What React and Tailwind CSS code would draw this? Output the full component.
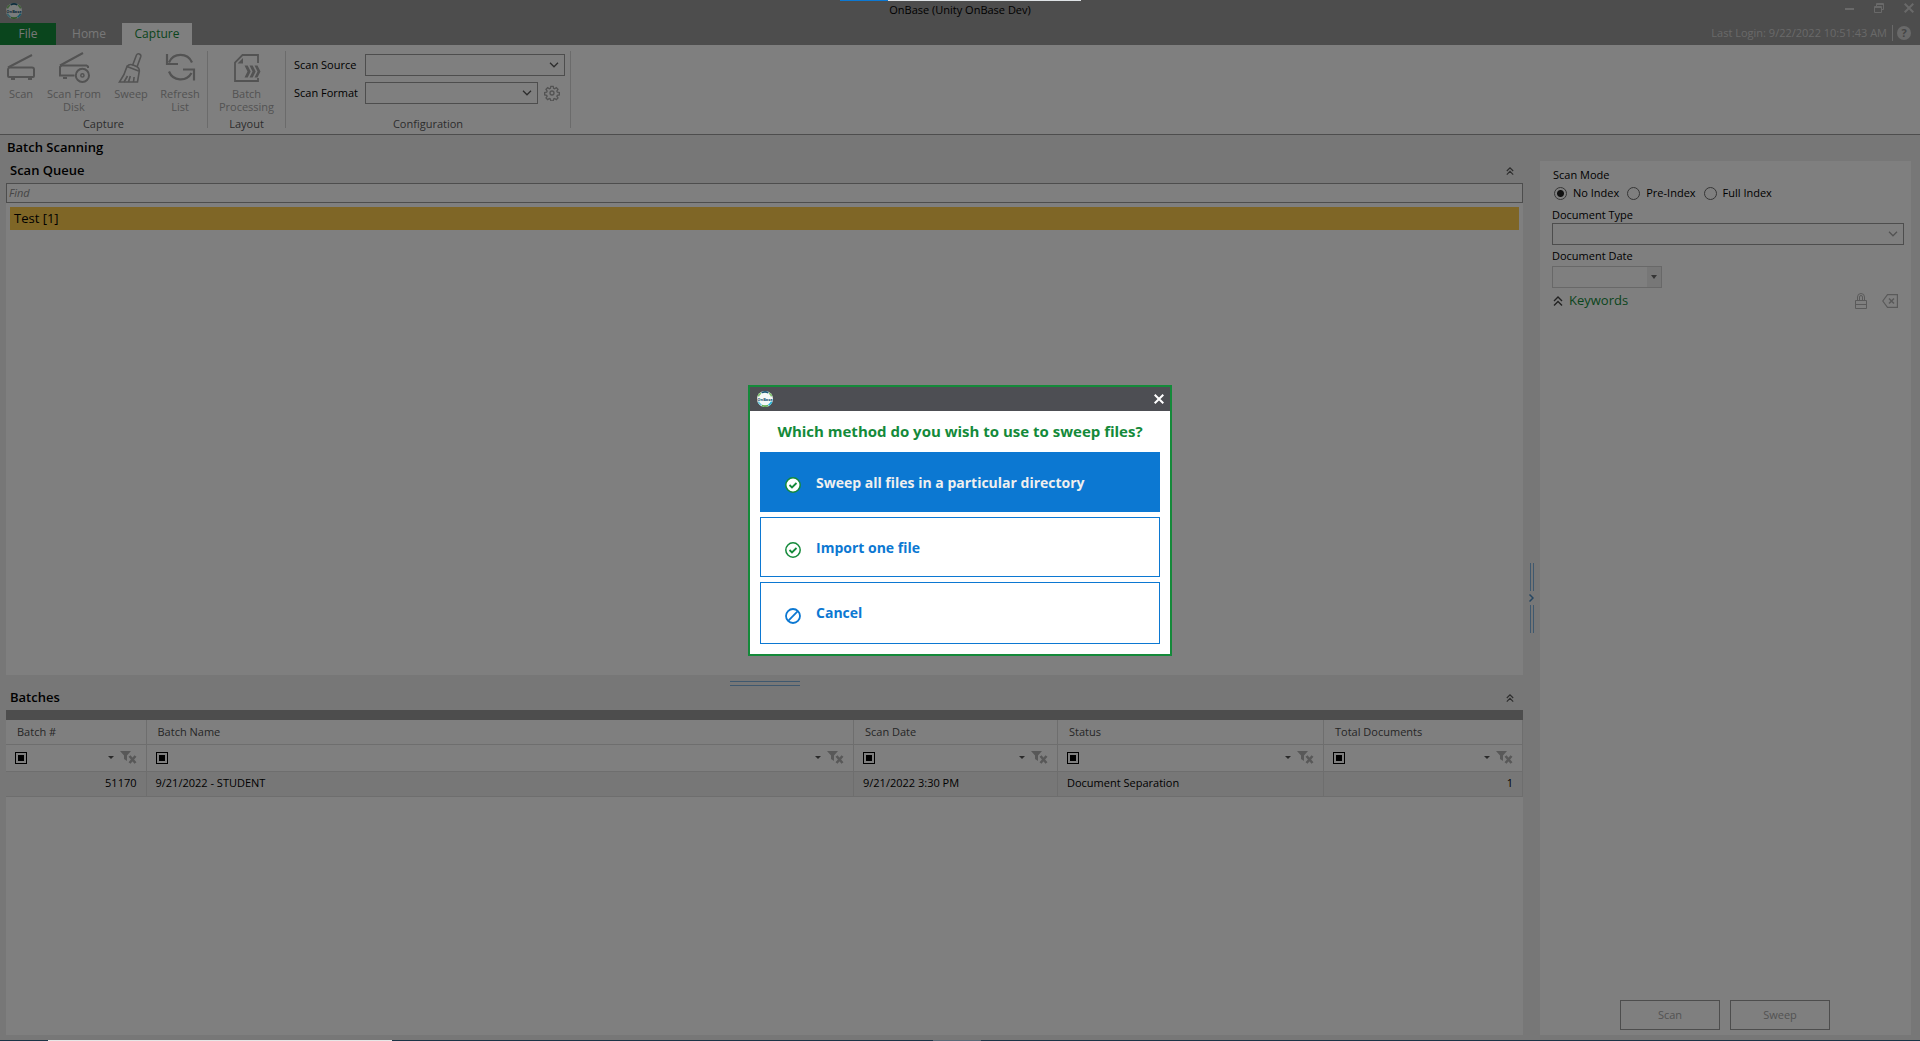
import { useState } from "react";

const columns = [
  { id: "number", label: "Batch #", value: "51170", width: "w-[140px]", align: "text-right" },
  { id: "name", label: "Batch Name", value: "9/21/2022 - STUDENT", width: "", align: "text-left" },
  { id: "date", label: "Scan Date", value: "9/21/2022 3:30 PM", width: "w-[204px]", align: "text-left" },
  { id: "status", label: "Status", value: "Document Separation", width: "w-[266px]", align: "text-left" },
  { id: "total", label: "Total Documents", value: "1", width: "w-[199px]", align: "text-right" },
];

function Logo() {
  return (
    <svg width="16" height="16" viewBox="0 0 16 16" aria-hidden="true">
      <circle cx="8" cy="8" r="8" fill="#f4f8f8" />
      <g fill="none" strokeWidth="1.6">
        <path d="M4.6 1.8a7.2 7.2 0 0 1 6.8 0" stroke="#1b5a78" />
        <path d="M1.3 5.4a7.2 7.2 0 0 1 2.6-3.2M12.1 2.2a7.2 7.2 0 0 1 2.6 3.2" stroke="#7cc36a" />
        <path d="M1.3 10.6a7.2 7.2 0 0 0 3.2 3.6" stroke="#6fc6d8" />
        <path d="M14.7 10.6a7.2 7.2 0 0 1-3.2 3.6" stroke="#27b4d6" />
        <path d="M5 14.4a7.2 7.2 0 0 0 6 0" stroke="#5aa84a" />
      </g>
      <text x="8" y="9.500" textAnchor="middle" fontSize="4" fontWeight="700" fill="#14506e" fontFamily="Open Sans, sans-serif">
        OnBase
      </text>
    </svg>
  );
}

function ScanIcon() {
  return (
    <svg width="32" height="32" viewBox="0 0 32 32" fill="none" stroke="currentColor" strokeWidth="2">
      <path d="M3 16.5 27 4" />
      <path d="M5 16.5h22a2 2 0 0 1 2 2V25a1 1 0 0 1-1 1H4a1 1 0 0 1-1-1v-6.500a2 2 0 0 1 2-2z" />
      <path d="M6 28h4M23 28h4" />
    </svg>
  );
}

function DiskIcon() {
  return (
    <svg width="32" height="32" viewBox="0 0 32 32" fill="none" stroke="currentColor" strokeWidth="2">
      <path d="M2 14.500 25 2" />
      <path d="M30 17v-1.500l-1.500-1H3.500L2 16v8.500h14.500" />
      <path d="M5 27h4" />
      <circle cx="24.400" cy="24.400" r="6.600" />
      <circle cx="24.400" cy="24.400" r="1.600" strokeWidth="1.500" />
    </svg>
  );
}

function BroomIcon() {
  return (
    <svg width="32" height="32" viewBox="0 0 32 32" fill="none" stroke="currentColor" strokeWidth="1.600">
      <path d="M17.500 14.500 21.500 4a2.300 2.300 0 0 1 4.300 1.500L22 16" />
      <path d="M12 15.500c1.500-2 3.500-2.500 6-1.500l3 1.200c2.500 1 3.500 2.500 3.300 5" />
      <path d="M12 15.500 24.300 20.200 22.500 31H4.500C8 26 10.500 21 12 15.500z" />
      <path d="M9 31l3.500-6M13.500 31l1.800-6M18.500 31l.6-5" />
    </svg>
  );
}

function RefreshIcon() {
  return (
    <svg width="32" height="32" viewBox="0 0 32 32" fill="none" stroke="currentColor" strokeWidth="2.200">
      <path d="M28 11.500A12.500 12.500 0 0 0 5 11.500M3 3v10h11" />
      <path d="M5 20.500a12.500 12.500 0 0 0 22.500 1.500M30 29.500V18.500H19" />
    </svg>
  );
}

function BatchIcon() {
  return (
    <svg width="32" height="32" viewBox="0 0 32 32" fill="none" stroke="currentColor" strokeWidth="1.800">
      <path d="M27 12V4H11.500L4 11.500V30h23v-3" />
      <path d="M6.500 12.500 12 7v5.500z" fill="currentColor" stroke="none" />
      <path d="M13.500 14.500h3.200l3 6-3 6h-3.200l3-6zM18.500 14.500h3.200l3 6-3 6h-3.200l3-6zM23.500 14.500h3l3 6-3 6h-3l3-6z" fill="currentColor" stroke="none" />
    </svg>
  );
}

function GearIcon() {
  return (
    <svg width="16" height="16" viewBox="0 0 24 24" fill="none" stroke="currentColor" strokeWidth="2">
      <circle cx="12" cy="12" r="3" />
      <path d="M10.200 2h3.600l.6 3 1.500.7 2.600-1.700 2.500 2.500-1.700 2.600.7 1.500 3 .6v3.600l-3 .6-.7 1.500 1.700 2.600-2.500 2.500-2.600-1.700-1.500.7-.6 3h-3.600l-.6-3-1.500-.7-2.600 1.700L3 19.500l1.700-2.600-.7-1.500-3-.6v-3.600l3-.6.7-1.500L3 6.500 5.500 4l2.600 1.700 1.500-.7z" />
    </svg>
  );
}

function Chevron({ className }) {
  return (
    <svg className={className} width="10" height="6" viewBox="0 0 10 6" fill="none" stroke="currentColor" strokeWidth="1.300">
      <path d="M1 .8 5 4.800 9 .8" />
    </svg>
  );
}

function CollapseIcon({ className }) {
  return (
    <svg className={className} viewBox="0 0 10 10" fill="none" stroke="currentColor" strokeWidth="1.400">
      <path d="M1 5 5 1l4 4M1 9.500l4-4 4 4" />
    </svg>
  );
}

function FilterClearIcon() {
  return (
    <svg width="17" height="13" viewBox="0 0 17 13" fill="#b0b0b0">
      <path d="M0 0h11L7 4.500V10L4 8V4.500z" />
      <path d="m9.500 5 6 7M15.500 5l-6 7" stroke="#b0b0b0" strokeWidth="2.600" />
    </svg>
  );
}

function CheckCircle({ className }) {
  return (
    <svg className={className} width="16" height="16" viewBox="0 0 16 16" fill="none" stroke="#148a3a">
      <circle cx="8" cy="8" r="7.200" fill="#fff" strokeWidth="1.500" />
      <path d="m4.500 8 2.500 2.500 4.500-4.500" strokeWidth="1.800" />
    </svg>
  );
}

function NoCircle({ className }) {
  return (
    <svg className={className} width="16" height="16" viewBox="0 0 16 16" fill="none" stroke="#0c78d2" strokeWidth="1.800">
      <circle cx="8" cy="8" r="7" />
      <path d="M3.200 12.800 12.800 3.200" />
    </svg>
  );
}

function RibbonButton({ icon, children, className }) {
  return (
    <button type="button" className={`flex flex-col items-center text-[#a6a6a6] ${className}`}>
      {icon}
      <span className="mt-1 text-center leading-[13px]">{children}</span>
    </button>
  );
}

function RibbonGroup({ title, children, className }) {
  return (
    <div className={`my-1.5 flex flex-col justify-between border-r border-[#d6d6d6] ${className}`}>
      {children}
      <span className="-mb-1 text-center leading-4 text-[#5a5a5a]">{title}</span>
    </div>
  );
}

function ComboBox({ id, className, chevron }) {
  return (
    <div className={`relative ${className}`}>
      <select id={id} className="block h-[22px] w-full appearance-none border border-[#9a9a9a] bg-white px-1" />
      <Chevron className={`pointer-events-none absolute top-2 right-1.5 ${chevron}`} />
    </div>
  );
}

function TitleBar() {
  return (
    <header className="flex h-[45px] shrink-0 items-stretch justify-between bg-[#9a9a9a]">
      <div className="flex flex-1 flex-col justify-between">
        <div className="pt-[3px] pl-1.5">
          <Logo />
        </div>
        <nav className="flex h-[22px] text-xs">
          <button type="button" className="w-14 bg-[#148a3a] text-[#ededed]">File</button>
          <button type="button" className="w-[66px] text-[#efefef]">Home</button>
          <button type="button" className="w-[70px] bg-white text-[#148a3a]">Capture</button>
        </nav>
      </div>
      <h1 className="text-center text-[11px] leading-5">OnBase (Unity OnBase Dev)</h1>
      <div className="flex flex-1 flex-col items-end justify-between text-[#d2d2d2]">
        <div className="flex h-4 items-center gap-5 pr-1.5">
          <button type="button" aria-label="Minimize" className="block">
            <svg width="9" height="10" viewBox="0 0 9 10" stroke="currentColor" strokeWidth="2"><path d="M0 6h9" /></svg>
          </button>
          <button type="button" aria-label="Restore" className="block">
            <svg width="10" height="10" viewBox="0 0 10 10" fill="none" stroke="currentColor">
              <path d="M2.500 3.500v-3h7v6h-2M.5 3.500h7v6h-7zM.5 4.500h7M2.500 1.500h7" />
            </svg>
          </button>
          <button type="button" aria-label="Close" className="block">
            <svg width="10" height="10" viewBox="0 0 10 10" stroke="currentColor" strokeWidth="2"><path d="m.7.7 8.600 8.600M9.300.7.7 9.300" /></svg>
          </button>
        </div>
        <div className="flex h-6 items-center gap-1 pr-[9px]">
          <span className="text-[11px]">Last Login: 9/22/2022 10:51:43 AM</span>
          <span className="ml-px h-4 w-px bg-[#d2d2d2]" />
          <button type="button" aria-label="Help" className="h-[14px] w-[14px] rounded-full bg-[#d2d2d2] text-[11px] leading-[14px] font-bold text-[#8a8a8a]">
            ?
          </button>
        </div>
      </div>
    </header>
  );
}

function Ribbon() {
  return (
    <div className="flex h-[90px] shrink-0 border-b border-[#9a9a9a] bg-white text-[11px]">
      <RibbonGroup title="Capture" className="w-52">
        <div className="flex items-start">
          <RibbonButton icon={<ScanIcon />} className="w-[42px]">Scan</RibbonButton>
          <RibbonButton icon={<DiskIcon />} className="w-16">Scan From<br />Disk</RibbonButton>
          <RibbonButton icon={<BroomIcon />} className="w-[50px]">Sweep</RibbonButton>
          <RibbonButton icon={<RefreshIcon />} className="w-12">Refresh<br />List</RibbonButton>
        </div>
      </RibbonGroup>
      <RibbonGroup title="Layout" className="w-[78px] items-center">
        <RibbonButton icon={<BatchIcon />} className="w-[70px]">Batch<br />Processing</RibbonButton>
      </RibbonGroup>
      <RibbonGroup title="Configuration" className="w-[285px]">
        <div className="flex flex-col gap-1.5 pt-[3px] pl-2">
          <div className="flex items-center">
            <label htmlFor="scan-source" className="w-[71px]">Scan Source</label>
            <ComboBox id="scan-source" className="w-[200px]" chevron="text-[#5a5a5a]" />
          </div>
          <div className="flex items-center">
            <label htmlFor="scan-format" className="w-[71px] whitespace-nowrap">Scan Format</label>
            <ComboBox id="scan-format" className="w-[173px]" chevron="text-[#5a5a5a]" />
            <button type="button" aria-label="Scan format settings" className="ml-1.5 text-[#a6a6a6]">
              <GearIcon />
            </button>
          </div>
        </div>
      </RibbonGroup>
    </div>
  );
}

function PanelTitle({ children }) {
  return (
    <div className="flex h-6 items-center justify-between pr-[9px] pl-1">
      <h2 className="text-[13px] font-semibold">{children}</h2>
      <button type="button" aria-label={`Collapse ${children}`}>
        <CollapseIcon className="h-2 w-2 text-[#5a5a5a]" />
      </button>
    </div>
  );
}

function ScanQueue() {
  return (
    <section className="flex h-[516px] shrink-0 flex-col">
      <PanelTitle>Scan Queue</PanelTitle>
      <input
        type="text"
        aria-label="Find"
        placeholder="Find"
        className="h-5 w-full shrink-0 border border-[#9a9a9a] bg-white px-0.5 pb-0.5 text-[11px] italic placeholder:text-[#8c8c8c]"
      />
      <ul className="flex-1 bg-white p-1">
        <li className="h-[23px] bg-[#ffcc4d] pl-1 text-[13px] leading-[22px]">Test [1]</li>
      </ul>
    </section>
  );
}

function Batches() {
  return (
    <section className="flex min-h-0 flex-1 flex-col">
      <PanelTitle>Batches</PanelTitle>
      <div className="h-2.5 shrink-0 bg-[#9a9a9a]" />
      <div className="flex-1 bg-white">
        <table className="w-full table-fixed border-collapse text-[11px]">
          <thead>
            <tr className="h-6 border-b border-[#dcdcdc] text-left text-[#4d4d4d]">
              {columns.map((c) => (
                <th key={c.id} className={`border-r border-[#dcdcdc] pl-[11px] font-normal ${c.width}`}>
                  {c.label}
                </th>
              ))}
            </tr>
            <tr className="h-[27px] border-b border-[#dcdcdc]">
              {columns.map((c) => (
                <td key={c.id} className="border-r border-[#dcdcdc] pr-[9px] pl-[9px]">
                  <div className="flex items-center">
                    <button type="button" aria-label={`Filter type for ${c.label}`} className="mr-auto flex h-3 w-3 items-center justify-center border border-black">
                      <span className="h-1.5 w-1.5 bg-black" />
                    </button>
                    <button type="button" aria-label={`Filter values for ${c.label}`} className="mr-1.5">
                      <svg width="6" height="3" viewBox="0 0 6 3" fill="#555"><path d="M0 0h6L3 3z" /></svg>
                    </button>
                    <button type="button" aria-label={`Clear filter for ${c.label}`}>
                      <FilterClearIcon />
                    </button>
                  </div>
                </td>
              ))}
            </tr>
          </thead>
          <tbody>
            <tr className="h-[25px] border-b border-[#dcdcdc] bg-[#efefef]">
              {columns.map((c) => (
                <td key={c.id} className={`border-r border-[#dcdcdc] pr-[9px] pl-[9px] ${c.align}`}>
                  {c.value}
                </td>
              ))}
            </tr>
          </tbody>
        </table>
      </div>
    </section>
  );
}

function IndexPanel() {
  const [mode, setMode] = useState("No Index");

  return (
    <aside className="mt-[26px] flex w-[371px] shrink-0 flex-col bg-white pt-1.5 pr-[7px] pl-3 text-[11px]">
      <fieldset className="pl-px">
        <legend className="leading-4">Scan Mode</legend>
        <div className="flex h-5 items-center gap-2 pl-px">
          {["No Index", "Pre-Index", "Full Index"].map((name) => (
            <label key={name} className="flex items-center gap-1.5">
              <input
                type="radio"
                name="scan-mode"
                checked={mode === name}
                onChange={() => setMode(name)}
                className="h-[13px] w-[13px] appearance-none rounded-full border border-[#6b6b6b] bg-white checked:bg-[radial-gradient(circle,#222_0_3px,#fff_4px)]"
              />
              {name}
            </label>
          ))}
        </div>
      </fieldset>
      <label htmlFor="document-type" className="mt-1 leading-4">Document Type</label>
      <ComboBox id="document-type" className="w-full" chevron="text-[#a6a6a6]" />
      <label htmlFor="document-date" className="mt-[3px] leading-4">Document Date</label>
      <div className="mt-0.5 flex h-[22px] w-[110px] border border-[#d0d0d0]">
        <input id="document-date" type="text" className="min-w-0 flex-1 bg-white" />
        <button type="button" aria-label="Pick a date" className="flex w-3.5 items-center justify-center bg-[#efefef]">
          <svg width="6" height="4" viewBox="0 0 6 4" fill="#6b6b6b"><path d="M0 0h6L3 4z" /></svg>
        </button>
      </div>
      <div className="mt-[3px] flex h-5 items-center">
        <button type="button" className="mr-auto flex items-center gap-1.5 pl-px text-[13px] font-medium text-[#148a3a]">
          <CollapseIcon className="h-2.5 w-2.5 text-[#444]" />
          Keywords
        </button>
        <button type="button" aria-label="Lock keywords" className="mr-[15px] text-[#b4b4b4]">
          <svg width="12" height="16" viewBox="0 0 12 16" fill="none" stroke="currentColor">
            <path d="M.5 7.500h11v8H.5zM.5 11.500h11M2.500 7.500V4a3.500 3.500 0 0 1 7 0v3.500M4.500 7.500V4a1.500 1.500 0 0 1 3 0v3.500" />
          </svg>
        </button>
        <button type="button" aria-label="Clear keywords" className="mr-1.5 text-[#b4b4b4]">
          <svg width="16" height="14" viewBox="0 0 16 14" fill="none" stroke="currentColor" strokeWidth="1.200">
            <path d="M5.500.6h9.900v12.800H5.500L.8 7z" />
            <path d="m7 4.500 5 5M12 4.500l-5 5" strokeWidth="1.600" />
          </svg>
        </button>
      </div>
      <div className="mt-auto mb-[5px] flex gap-2.5 pl-[68px] text-[#a6a6a6]">
        <button type="button" className="h-[30px] w-[100px] border border-[#9a9a9a]">Scan</button>
        <button type="button" className="h-[30px] w-[100px] border border-[#9a9a9a]">Sweep</button>
      </div>
    </aside>
  );
}

function SweepDialog() {
  return (
    <div role="dialog" aria-modal="true" aria-labelledby="sweep-title" className="w-[424px] border-2 border-[#148a3a] bg-white text-sm font-bold">
      <div className="flex h-6 items-center justify-between bg-[#4d4e53] pr-1.5 pl-[7px]">
        <Logo />
        <button type="button" aria-label="Close" className="text-white">
          <svg width="10" height="10" viewBox="0 0 10 10" stroke="currentColor" strokeWidth="2"><path d="m.7.7 8.600 8.600M9.300.7.7 9.300" /></svg>
        </button>
      </div>
      <h2 id="sweep-title" className="pt-0.5 text-center text-[15px] leading-9 text-[#148a3a]">
        Which method do you wish to use to sweep files?
      </h2>
      <div className="flex flex-col gap-[5px] px-2.5 pt-[3px] pb-2.5">
        <button type="button" className="flex h-[60px] items-center gap-[15px] border border-[#0c78d2] bg-[#0c78d2] pl-6 text-[#efefef]">
          <CheckCircle className="mt-1.5" />
          <span className="mt-0.5">Sweep all files in a particular directory</span>
        </button>
        <button type="button" className="flex h-[60px] items-center gap-[15px] border border-[#0c78d2] pl-6 text-[#0c78d2]">
          <CheckCircle className="mt-1.5" />
          <span className="mt-0.5">Import one file</span>
        </button>
        <button type="button" className="flex h-[62px] items-center gap-[15px] border border-[#0c78d2] pl-6 text-[#0c78d2]">
          <NoCircle className="mt-1.5" />
          <span>Cancel</span>
        </button>
      </div>
    </div>
  );
}

export default function App() {
  return (
    <div className="flex h-screen flex-col overflow-hidden bg-[#eeeeee] font-['Open_Sans','Noto_Sans',sans-serif] text-black">
      <TitleBar />
      <Ribbon />
      <div className="flex min-h-0 flex-1 pr-[9px] pb-1.5 pl-1.5">
        <main className="flex min-w-0 flex-1 flex-col">
          <h2 className="h-6 pl-px text-[13px] leading-6 font-semibold">Batch Scanning</h2>
          <ScanQueue />
          <div className="flex h-[11px] shrink-0 flex-col items-center justify-end gap-[3px]">
            <span className="h-px w-[70px] bg-[#7fb0dd]" />
            <span className="h-px w-[70px] bg-[#7fb0dd]" />
          </div>
          <Batches />
        </main>
        <div className="flex w-[17px] flex-col items-center justify-center gap-[3px] pt-[26px]">
          <span className="h-7 w-1 border-x border-[#7fb0dd]" />
          <svg width="5" height="8" viewBox="0 0 5 8" fill="none" stroke="#4a8cc4" strokeWidth="1.500"><path d="m.5.5 3.500 3.500-3.500 3.500" /></svg>
          <span className="h-7 w-1 border-x border-[#7fb0dd]" />
        </div>
        <IndexPanel />
      </div>

      <div className="fixed inset-0 flex items-center justify-center bg-black/50">
        <SweepDialog />
      </div>

      <div className="fixed inset-x-0 top-0 flex justify-center">
        <span className="h-px w-12 bg-[#0c78d2]" />
        <span className="h-px w-[193px] bg-[#dfe3e6]" />
      </div>
      <div className="fixed inset-x-0 bottom-0 flex h-px bg-[#1c3447]">
        <span className="ml-12 w-[344px] bg-[#e6e6e6]" />
        <span className="ml-[541px] w-12 bg-[#5b6b78]" />
      </div>
    </div>
  );
}
